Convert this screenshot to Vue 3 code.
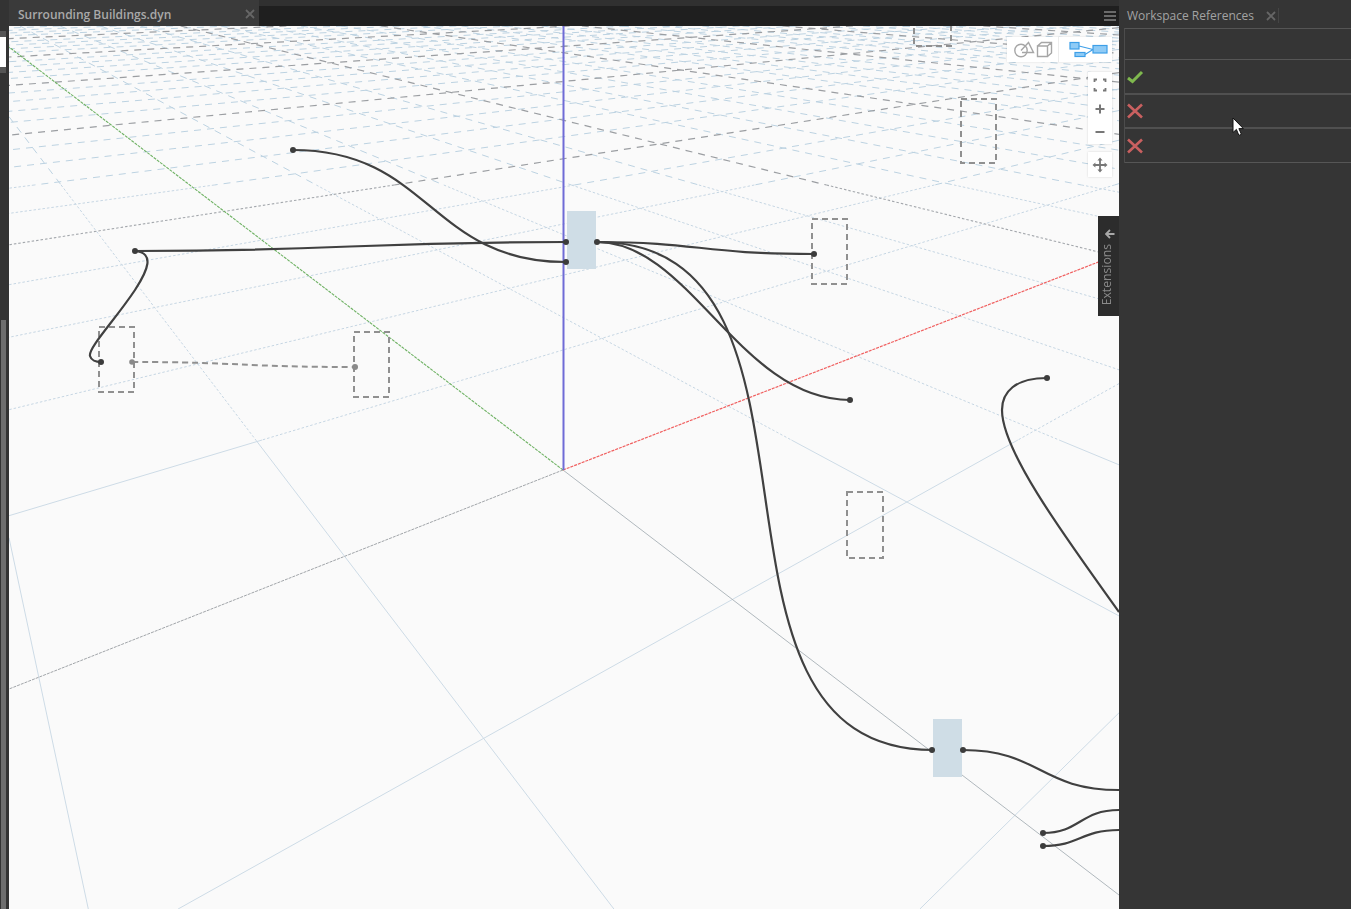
<script setup>
const V1 = [1890, -47]
const V2 = [-116, -47]
const O = [563, 470]
const A = 0.1417
const B = 0.2
const box = { x0: 9, x1: 1119, y0: 26, y1: 909 }
const buckets = { minorFar: '', minorMid: '', minorNear: '', majorFar: '', majorMid: '', majorNear: '' }

function project(s, v) {
  return [(O[0] + s * v[0]) / (1 + s), (O[1] + s * v[1]) / (1 + s)]
}

function clip(p, q) {
  let t0 = 0
  let t1 = 1
  const dx = q[0] - p[0]
  const dy = q[1] - p[1]
  const tests = [[-dx, p[0] - box.x0], [dx, box.x1 - p[0]], [-dy, p[1] - box.y0], [dy, box.y1 - p[1]]]
  for (const [a, b] of tests) {
    if (a === 0) {
      if (b < 0) return null
    } else {
      const r = b / a
      if (a < 0) t0 = Math.max(t0, r)
      else t1 = Math.min(t1, r)
    }
  }
  return t0 < t1 ? [t0, t1] : null
}

function addLine(vp, through, major) {
  const k = 1600 / (through[1] - vp[1])
  const far = [vp[0] + k * (through[0] - vp[0]), vp[1] + k * (through[1] - vp[1])]
  const range = clip(vp, far)
  if (!range) return
  const at = (t) => [vp[0] + t * (far[0] - vp[0]), vp[1] + t * (far[1] - vp[1])]
  const tY = (y) => (y - vp[1]) / (far[1] - vp[1])
  const stops = [range[0], Math.min(range[1], Math.max(range[0], tY(185))), Math.min(range[1], Math.max(range[0], tY(440))), range[1]]
  const names = major ? ['majorFar', 'majorMid', 'majorNear'] : ['minorFar', 'minorMid', 'minorNear']
  names.forEach((name, i) => {
    if (stops[i + 1] <= stops[i]) return
    const a = at(stops[i])
    const b = at(stops[i + 1])
    buckets[name] += `M${a[0].toFixed(1)} ${a[1].toFixed(1)}L${b[0].toFixed(1)} ${b[1].toFixed(1)}`
  })
}

for (let u = -2; u <= 90; u++) {
  if (u === 0) continue
  addLine(V2, project(u * A, V1), u % 5 === 0)
}
for (let v = -3; v <= 60; v++) {
  if (v === 0) continue
  addLine(V1, project(v * B, V2), v % 5 === 0)
}

const gridPaths = Object.entries(buckets).map(([name, d]) => ({ name, d }))

const dashedBoxes = [
  { x: 99, y: 327, w: 35, h: 65 },
  { x: 354, y: 332, w: 35, h: 65 },
  { x: 847, y: 492, w: 36, h: 66 },
  { x: 812, y: 219, w: 35, h: 65 },
  { x: 961, y: 99, w: 35, h: 64 },
  { x: 914, y: -18, w: 37, h: 64 }
]
const codeBlocks = [
  { x: 567, y: 211 },
  { x: 933, y: 719 }
]
const wires = [
  'M293 150C430 150 430 262 566 262',
  'M135 251C155 253 148 270 135 290C115 320 88 348 90 356C91 360 96 362 101 362',
  'M135 251C350 251 350 242 566 242',
  'M597 242C700 242 700 254 814 254',
  'M597 242C690 242 740 400 850 400',
  'M597 242C860 242 670 750 933 750',
  'M963 750C1040 750 1040 790 1119 790',
  'M1043 833C1080 833 1080 810 1119 810',
  'M1043 846C1080 846 1080 830 1119 830',
  'M1047 378C1015 378 1002 392 1002 410C1002 450 1060 530 1119 612'
]
const ports = [
  [566, 242], [566, 262], [597, 242], [814, 254], [850, 400], [293, 150], [135, 251], [101, 362],
  [1047, 378], [932, 750], [963, 750], [1043, 833], [1043, 846]
]
const rows = [
  { kind: 'empty' },
  { kind: 'ok' },
  { kind: 'bad' },
  { kind: 'bad' }
]
</script>

<template>
  <div class="app">
    <aside class="rail">
      <div class="rail-band"></div>
      <div class="rail-white"></div>
      <div class="rail-band"></div>
      <div class="rail-thumb"></div>
    </aside>

    <main class="center">
      <header class="tabbar">
        <div class="tab">
          <span class="tab-title">Surrounding Buildings.dyn</span>
          <svg class="tab-x" width="10" height="10" viewBox="0 0 10 10"><path d="M1 1L9 9M9 1L1 9" /></svg>
        </div>
        <div class="tab-fill">
          <div class="burger"><i></i><i></i><i></i></div>
        </div>
      </header>

      <section class="canvas">
        <svg class="scene" width="1110" height="883" viewBox="9 26 1110 883">
          <path v-for="g in gridPaths" :key="g.name" :class="['grid', g.name]" :d="g.d" />
          <path class="axis-neg" d="M563 470L9 689" />
          <path class="axis-neg solid" d="M563 470L1119 895" />
          <path class="axis-green" d="M563 470L9 47" />
          <path class="axis-red" d="M563 470L1119 254" />
          <path class="axis-blue" d="M563.5 470V26" />

          <rect v-for="(b, i) in codeBlocks" :key="i" class="code-block" :x="b.x" :y="b.y" width="29" height="58" />
          <rect v-for="(b, i) in dashedBoxes" :key="'d' + i" class="frozen" :x="b.x" :y="b.y" :width="b.w" :height="b.h" />

          <path class="wire-ghost" d="M132 362C240 362 240 367 355 367" />
          <circle class="port-ghost" cx="132" cy="362" r="2.8" />
          <circle class="port-ghost" cx="355" cy="367" r="3" />
          <path v-for="(d, i) in wires" :key="'w' + i" class="wire" :d="d" />
          <circle v-for="(p, i) in ports" :key="'p' + i" class="port" :cx="p[0]" :cy="p[1]" r="3" />
        </svg>

        <div class="view-toggle">
          <div class="toggle-cell">
            <svg width="40" height="20" viewBox="0 0 40 20" class="geo-icon">
              <circle cx="8" cy="10.5" r="6.2" />
              <path d="M8 10.5L15.5 2.5L20.5 12.5H9" />
              <path d="M24.5 6H34.5V16.5H24.5ZM24.5 6L28.5 2.5H38.5V13L34.5 16.5M34.5 6L38.5 2.5" />
            </svg>
          </div>
          <div class="toggle-cell on">
            <svg width="44" height="20" viewBox="0 0 44 20" class="graph-icon">
              <path class="link" d="M15 6L29 9.5M21 14.5L29 9.5" />
              <rect x="6" y="2.5" width="9" height="6.5" />
              <rect x="11" y="12.5" width="10" height="4" />
              <rect x="29" y="5.5" width="14" height="7.5" />
            </svg>
          </div>
        </div>

        <div class="zoom-stack">
          <button class="zoom-btn">
            <svg width="14" height="14" viewBox="0 0 14 14" class="ctl-icon"><path d="M1.5 4V1.5H4M10 1.5H12.5V4M12.5 10V12.5H10M4 12.5H1.5V10" /></svg>
          </button>
          <button class="zoom-btn">
            <svg width="14" height="14" viewBox="0 0 14 14" class="ctl-icon thick"><path d="M7 2.5V11.5M2.5 7H11.5" /></svg>
          </button>
          <button class="zoom-btn">
            <svg width="14" height="14" viewBox="0 0 14 14" class="ctl-icon thick"><path d="M2.5 7H11.5" /></svg>
          </button>
        </div>
        <button class="pan-btn">
          <svg width="16" height="16" viewBox="0 0 16 16" class="ctl-fill"><path d="M8 0.5L10.6 3.4H8.9V7.1H12.6V5.4L15.5 8L12.6 10.6V8.9H8.9V12.6H10.6L8 15.5L5.4 12.6H7.1V8.9H3.4V10.6L0.5 8L3.4 5.4V7.1H7.1V3.4H5.4Z" /></svg>
        </button>

        <div class="ext-tab">
          <svg width="10" height="10" viewBox="0 0 10 10" class="ext-arrow"><path d="M5 1L1 5L5 9M1.5 5H9.5" /></svg>
          <span class="ext-label">Extensions</span>
        </div>
      </section>
    </main>

    <aside class="panel">
      <header class="panel-head">
        <span class="panel-title">Workspace References</span>
        <svg class="panel-x" width="10" height="10" viewBox="0 0 10 10"><path d="M1 1L9 9M9 1L1 9" /></svg>
        <span class="panel-sep"></span>
      </header>
      <div class="table">
        <div v-for="(r, i) in rows" :key="i" :class="['row', 'row-' + i]">
          <svg v-if="r.kind === 'ok'" class="mark" width="18" height="14" viewBox="0 0 18 14"><path class="ok" d="M2 8L6.5 11.5L16 2" /></svg>
          <svg v-if="r.kind === 'bad'" class="mark" width="18" height="16" viewBox="0 0 18 16"><path class="bad" d="M2 1.5L16 14.5M16 1.5L2 14.5" /></svg>
        </div>
      </div>
      <svg class="cursor" width="13" height="20" viewBox="0 0 13 20"><path d="M1 1V15.5L4.4 12.4L6.9 18.4L9.4 17.3L6.9 11.6H11.4Z" /></svg>
    </aside>
  </div>
</template>

<style scoped>
.app {
  display: flex;
  width: 1351px;
  height: 909px;
  overflow: hidden;
  background: #353535;
  font-family: "Open Sans", "Liberation Sans", sans-serif;
}
.rail {
  display: flex;
  flex-direction: column;
  flex: 0 0 9px;
  width: 9px;
  padding-top: 31px;
  background: #333333;
}
.rail-band {
  width: 6px;
  height: 6px;
  background: #555555;
}
.rail-white {
  width: 6px;
  height: 30px;
  background: #ffffff;
}
.rail-thumb {
  width: 5px;
  height: 589px;
  margin-top: auto;
  margin-left: 1px;
  background: #6e6e6e;
}
.center {
  display: flex;
  flex-direction: column;
  flex: 0 0 1110px;
  width: 1110px;
}
.tabbar {
  display: flex;
  flex: 0 0 26px;
  padding-top: 6px;
  background: #303030;
  box-sizing: border-box;
}
.tab {
  display: flex;
  align-items: center;
  justify-content: space-between;
  width: 250px;
  margin-top: -6px;
  padding: 2px 4px 0 9px;
  box-sizing: border-box;
  background: #3a3a3a;
}
.tab-title {
  color: #a9a9a9;
  font-size: 12px;
  font-weight: 600;
  white-space: nowrap;
}
.tab-x path,
.panel-x path {
  fill: none;
  stroke: #666666;
  stroke-width: 1.8;
}
.tab-fill {
  display: flex;
  flex: 1;
  align-items: center;
  justify-content: flex-end;
  padding-right: 3px;
  background: #1f1f1f;
}
.burger {
  display: flex;
  flex-direction: column;
  gap: 2px;
  width: 12px;
}
.burger i {
  display: block;
  height: 2px;
  background: #6a6a6a;
}
.canvas {
  position: relative;
  flex: 1;
  overflow: hidden;
  background: #fafafa;
}
.scene {
  display: block;
  filter: blur(0.5px);
}
.grid {
  fill: none;
}
.minorFar {
  stroke: #bcd2e1;
  stroke-width: 1;
  stroke-dasharray: 7 6;
}
.minorMid {
  stroke: #c6d6e3;
  stroke-width: 1;
  stroke-dasharray: 2.5 2;
}
.minorNear {
  stroke: #cddbe6;
  stroke-width: 1;
}
.majorFar {
  stroke: #9b9ea2;
  stroke-width: 1.2;
  stroke-dasharray: 7 6;
}
.majorMid {
  stroke: #a3a7ac;
  stroke-width: 1.1;
  stroke-dasharray: 2.5 2;
}
.majorNear {
  stroke: #b4bcc2;
  stroke-width: 1;
}
.axis-neg {
  fill: none;
  stroke: #a0a4a8;
  stroke-width: 1;
  stroke-dasharray: 3 1;
}
.axis-neg.solid {
  stroke: #b0b8bd;
  stroke-dasharray: none;
}
.axis-green {
  fill: none;
  stroke: #6fb264;
  stroke-width: 1.1;
  stroke-dasharray: 3 1;
}
.axis-red {
  fill: none;
  stroke: #f06060;
  stroke-width: 1.2;
  stroke-dasharray: 3 1;
}
.axis-blue {
  fill: none;
  stroke: #6f6bd6;
  stroke-width: 2;
}
.code-block {
  fill: #cfdde6;
}
.frozen {
  fill: none;
  stroke: #909090;
  stroke-width: 2;
  stroke-dasharray: 6 4;
}
.wire {
  fill: none;
  stroke: #404040;
  stroke-width: 2.2;
}
.wire-ghost {
  fill: none;
  stroke: #909090;
  stroke-width: 2;
  stroke-dasharray: 6 4;
}
.port {
  fill: #3c3c3c;
}
.port-ghost {
  fill: #8a8a8a;
}
.view-toggle {
  position: absolute;
  top: 11px;
  left: 998px;
  display: flex;
  width: 105px;
  height: 25px;
  background: #ffffff;
  box-shadow: 0 0 2px rgba(0, 0, 0, 0.12);
}
.toggle-cell {
  display: flex;
  flex: 0 0 51px;
  align-items: center;
  justify-content: center;
  border-right: 1px solid #ececec;
}
.toggle-cell.on {
  flex: 1;
  border-right: 0;
}
.geo-icon path,
.geo-icon circle {
  fill: none;
  stroke: #a6a6a6;
  stroke-width: 1.4;
}
.graph-icon rect {
  fill: #8fcbf6;
  stroke: #3d9fe8;
  stroke-width: 1.2;
}
.graph-icon .link {
  fill: none;
  stroke: #3d9fe8;
  stroke-width: 1.1;
}
.zoom-stack {
  position: absolute;
  top: 46px;
  left: 1079px;
  display: flex;
  flex-direction: column;
  width: 24px;
  height: 72px;
  padding-top: 1px;
  box-sizing: border-box;
  background: #ffffff;
  box-shadow: 0 0 2px rgba(0, 0, 0, 0.15);
}
.zoom-btn {
  display: flex;
  flex: 1;
  align-items: center;
  justify-content: center;
  padding: 0;
  border: 0;
  background: transparent;
}
.pan-btn {
  position: absolute;
  top: 126px;
  left: 1079px;
  display: flex;
  align-items: center;
  justify-content: center;
  width: 24px;
  height: 25px;
  padding: 0;
  border: 0;
  background: #ffffff;
  box-shadow: 0 0 2px rgba(0, 0, 0, 0.15);
}
.ctl-icon path {
  fill: none;
  stroke: #777777;
  stroke-width: 1.8;
}
.ctl-icon.thick path {
  stroke-width: 2;
}
.ctl-fill path {
  fill: #777777;
}
.ext-tab {
  position: absolute;
  top: 190px;
  right: 0;
  display: flex;
  flex-direction: column;
  align-items: center;
  gap: 5px;
  width: 21px;
  height: 100px;
  padding-top: 13px;
  box-sizing: border-box;
  background: #2c2c2c;
}
.ext-arrow {
  margin-left: 2px;
}
.ext-arrow path {
  fill: none;
  stroke: #a8a8a8;
  stroke-width: 1.8;
}
.ext-label {
  margin-left: -5px;
  color: #8a8a8a;
  font-size: 12.2px;
  line-height: 13px;
  writing-mode: vertical-rl;
  transform: rotate(180deg);
}
.panel {
  position: relative;
  flex: 1;
  background: #353535;
}
.panel-head {
  display: flex;
  align-items: center;
  height: 28px;
  padding: 3px 0 0 8px;
  box-sizing: border-box;
}
.panel-title {
  color: #a3a3a3;
  font-size: 12px;
  white-space: nowrap;
}
.panel-x {
  margin-left: 12px;
}
.panel-sep {
  width: 1px;
  height: 15px;
  margin-left: 2px;
  background: #454545;
}
.table {
  margin-left: 5px;
  border-left: 1px solid #4c4c4c;
  border-top: 1px solid #555555;
}
.row {
  display: flex;
  align-items: center;
  padding-left: 1px;
  box-sizing: border-box;
  border-bottom: 1px solid #565656;
}
.row-0 {
  height: 31px;
}
.row-1 {
  height: 35px;
}
.row-2,
.row-3 {
  height: 34px;
}
.row-1,
.row-2 {
  border-bottom: 2px solid #505050;
}
.ok {
  fill: none;
  stroke: #7fb84e;
  stroke-width: 3;
}
.bad {
  fill: none;
  stroke: #c96060;
  stroke-width: 2.6;
}
.cursor {
  position: absolute;
  top: 117px;
  left: 113px;
}
.cursor path {
  fill: #ffffff;
  stroke: #111111;
  stroke-width: 1;
}
</style>
